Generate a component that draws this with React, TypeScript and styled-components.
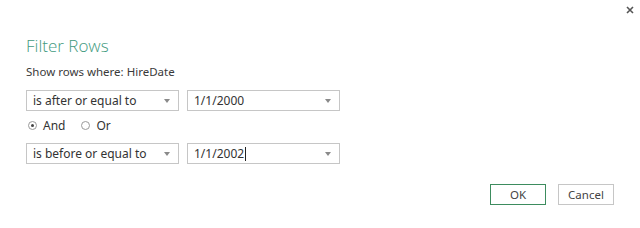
import React, { useState } from 'react'
import styled, { createGlobalStyle } from 'styled-components'

const GlobalStyle = createGlobalStyle`
    html, body {
        margin: 0;
        padding: 0;
        background: #ffffff;
    }
    body {
        font-family: "Noto Sans", "Liberation Sans", sans-serif;
        color: #444444;
    }
`

type Row = { op: string; value: string; caret?: boolean }

const rows: Row[] = [
    { op: 'is after or equal to', value: '1/1/2000' },
    { op: 'is before or equal to', value: '1/1/2002', caret: true },
]

export default function App() {
    const [logic, setLogic] = useState<'and' | 'or'>('and')

    return (
        <>
            <GlobalStyle />
            <Dialog>
                <CloseButton aria-label="Close">
                    <svg width="8" height="8" viewBox="0 0 8 8">
                        <path d="M1 1 L7 7 M7 1 L1 7" stroke="#555" strokeWidth="1.6" />
                    </svg>
                </CloseButton>
                <Title>Filter Rows</Title>
                <Subtitle>Show rows where: HireDate</Subtitle>

                {rows.map((row, i) => (
                    <React.Fragment key={row.op}>
                        {i === 1 && (
                            <RadioRow>
                                <RadioLabel onClick={() => setLogic('and')}>
                                    <Radio $checked={logic === 'and'} />
                                    And
                                </RadioLabel>
                                <RadioLabel onClick={() => setLogic('or')}>
                                    <Radio $checked={logic === 'or'} />
                                    Or
                                </RadioLabel>
                            </RadioRow>
                        )}
                        <FilterRow>
                            <Select>
                                <span>{row.op}</span>
                                <Arrow />
                            </Select>
                            <Select>
                                <span>
                                    {row.value}
                                    {row.caret && <Caret />}
                                </span>
                                <Arrow />
                            </Select>
                        </FilterRow>
                    </React.Fragment>
                ))}

                <Footer>
                    <Button $primary>OK</Button>
                    <Button>Cancel</Button>
                </Footer>
            </Dialog>
        </>
    )
}

const Dialog = styled.div`
    position: relative;
    width: 640px;
    height: 228px;
    box-sizing: border-box;
    padding: 34px 26px 0 26px;
    background: #fff;
`

const CloseButton = styled.div`
    position: absolute;
    top: 6px;
    right: 6px;
    width: 8px;
    height: 8px;
    display: flex;
`

const Title = styled.div`
    font-family: "Open Sans", "Liberation Sans", sans-serif;
    font-weight: 300;
    font-size: 17px;
    line-height: 24px;
    color: #3f9a80;
`

const Subtitle = styled.div`
    margin-top: 6px;
    font-size: 11.5px;
    line-height: 16px;
    color: #3a3a3a;
`

const FilterRow = styled.div`
    display: flex;
    gap: 8px;
    margin-top: 10px;
`

const Select = styled.div`
    width: 153px;
    height: 21px;
    box-sizing: border-box;
    border: 1px solid #c6c6c6;
    display: flex;
    align-items: center;
    justify-content: space-between;
    padding: 0 8px 0 6px;
    font-size: 12px;
    color: #333;

    span {
        display: flex;
        align-items: center;
    }
`

const Arrow = styled.div`
    width: 0;
    height: 0;
    border-left: 3.5px solid transparent;
    border-right: 3.5px solid transparent;
    border-top: 4px solid #8a8a8a;
`

const Caret = styled.i`
    display: inline-block;
    width: 1px;
    height: 14px;
    margin-left: 1px;
    background: #222;
`

const RadioRow = styled.div`
    display: flex;
    gap: 16px;
    margin-top: 6px;
    padding-left: 2px;
    height: 16px;
    align-items: center;
`

const RadioLabel = styled.label`
    display: flex;
    align-items: center;
    gap: 6px;
    font-size: 12px;
    color: #333;
    cursor: default;
`

const Radio = styled.span<{ $checked: boolean }>`
    width: 9px;
    height: 9px;
    box-sizing: border-box;
    border-radius: 50%;
    border: 1px solid #9a9a9a;
    display: flex;
    align-items: center;
    justify-content: center;

    &::after {
        content: '';
        width: 3px;
        height: 3px;
        border-radius: 50%;
        background: ${p => (p.$checked ? '#444' : 'transparent')};
    }
`

const Footer = styled.div`
    display: flex;
    justify-content: flex-end;
    gap: 12px;
    margin-top: 20px;
    width: 588px;
`

const Button = styled.div<{ $primary?: boolean }>`
    width: 56px;
    height: 21px;
    box-sizing: border-box;
    border: 1px solid ${p => (p.$primary ? '#3d8c5e' : '#c6c6c6')};
    display: flex;
    align-items: center;
    justify-content: center;
    font-size: 11.5px;
    color: #444;
`
